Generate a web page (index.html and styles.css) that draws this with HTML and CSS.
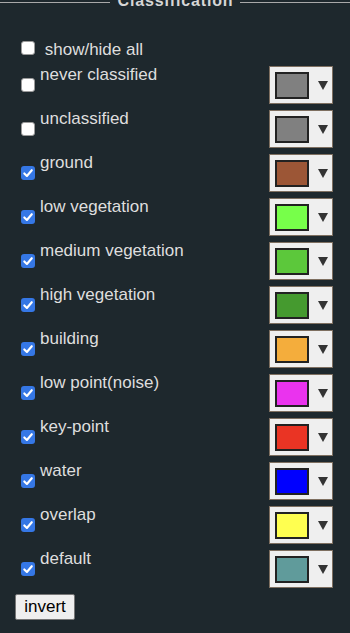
FILE: index.html
```html
<!DOCTYPE html>
<html>
<head>
<meta charset="utf-8">
<link rel="stylesheet" href="styles.css">
</head>
<body>
<div class="panel">
  <div class="legend-row">
    <span class="line"></span>
    <span class="legend">Classification</span>
    <span class="line"></span>
  </div>
  <div class="show-row">
    <span class="cb"></span>
    <span class="label">&nbsp;show/hide all</span>
  </div>
  <ul class="list">
    <li class="row"><span class="cb"></span><span class="label">never classified</span><span class="picker"><span class="swatch" style="background:#808080"></span><svg class="arrow" width="10" height="9" viewBox="0 0 10 9"><polygon points="0,0 10,0 5,9" fill="#333"/></svg></span></li>
    <li class="row"><span class="cb"></span><span class="label">unclassified</span><span class="picker"><span class="swatch" style="background:#808080"></span><svg class="arrow" width="10" height="9" viewBox="0 0 10 9"><polygon points="0,0 10,0 5,9" fill="#333"/></svg></span></li>
    <li class="row"><span class="cb on"><svg width="14" height="14" viewBox="0 0 14 14"><path d="M3.3 7.4 L5.9 10 L10.8 4.2" fill="none" stroke="#fff" stroke-width="2.1" stroke-linecap="round" stroke-linejoin="round"/></svg></span><span class="label">ground</span><span class="picker"><span class="swatch" style="background:#9c5636"></span><svg class="arrow" width="10" height="9" viewBox="0 0 10 9"><polygon points="0,0 10,0 5,9" fill="#333"/></svg></span></li>
    <li class="row"><span class="cb on"><svg width="14" height="14" viewBox="0 0 14 14"><path d="M3.3 7.4 L5.9 10 L10.8 4.2" fill="none" stroke="#fff" stroke-width="2.1" stroke-linecap="round" stroke-linejoin="round"/></svg></span><span class="label">low vegetation</span><span class="picker"><span class="swatch" style="background:#77ff4a"></span><svg class="arrow" width="10" height="9" viewBox="0 0 10 9"><polygon points="0,0 10,0 5,9" fill="#333"/></svg></span></li>
    <li class="row"><span class="cb on"><svg width="14" height="14" viewBox="0 0 14 14"><path d="M3.3 7.4 L5.9 10 L10.8 4.2" fill="none" stroke="#fff" stroke-width="2.1" stroke-linecap="round" stroke-linejoin="round"/></svg></span><span class="label">medium vegetation</span><span class="picker"><span class="swatch" style="background:#5cc83b"></span><svg class="arrow" width="10" height="9" viewBox="0 0 10 9"><polygon points="0,0 10,0 5,9" fill="#333"/></svg></span></li>
    <li class="row"><span class="cb on"><svg width="14" height="14" viewBox="0 0 14 14"><path d="M3.3 7.4 L5.9 10 L10.8 4.2" fill="none" stroke="#fff" stroke-width="2.1" stroke-linecap="round" stroke-linejoin="round"/></svg></span><span class="label">high vegetation</span><span class="picker"><span class="swatch" style="background:#459a2f"></span><svg class="arrow" width="10" height="9" viewBox="0 0 10 9"><polygon points="0,0 10,0 5,9" fill="#333"/></svg></span></li>
    <li class="row"><span class="cb on"><svg width="14" height="14" viewBox="0 0 14 14"><path d="M3.3 7.4 L5.9 10 L10.8 4.2" fill="none" stroke="#fff" stroke-width="2.1" stroke-linecap="round" stroke-linejoin="round"/></svg></span><span class="label">building</span><span class="picker"><span class="swatch" style="background:#f4ad3c"></span><svg class="arrow" width="10" height="9" viewBox="0 0 10 9"><polygon points="0,0 10,0 5,9" fill="#333"/></svg></span></li>
    <li class="row"><span class="cb on"><svg width="14" height="14" viewBox="0 0 14 14"><path d="M3.3 7.4 L5.9 10 L10.8 4.2" fill="none" stroke="#fff" stroke-width="2.1" stroke-linecap="round" stroke-linejoin="round"/></svg></span><span class="label">low point(noise)</span><span class="picker"><span class="swatch" style="background:#ea33ee"></span><svg class="arrow" width="10" height="9" viewBox="0 0 10 9"><polygon points="0,0 10,0 5,9" fill="#333"/></svg></span></li>
    <li class="row"><span class="cb on"><svg width="14" height="14" viewBox="0 0 14 14"><path d="M3.3 7.4 L5.9 10 L10.8 4.2" fill="none" stroke="#fff" stroke-width="2.1" stroke-linecap="round" stroke-linejoin="round"/></svg></span><span class="label">key-point</span><span class="picker"><span class="swatch" style="background:#ea3424"></span><svg class="arrow" width="10" height="9" viewBox="0 0 10 9"><polygon points="0,0 10,0 5,9" fill="#333"/></svg></span></li>
    <li class="row"><span class="cb on"><svg width="14" height="14" viewBox="0 0 14 14"><path d="M3.3 7.4 L5.9 10 L10.8 4.2" fill="none" stroke="#fff" stroke-width="2.1" stroke-linecap="round" stroke-linejoin="round"/></svg></span><span class="label">water</span><span class="picker"><span class="swatch" style="background:#0000ff"></span><svg class="arrow" width="10" height="9" viewBox="0 0 10 9"><polygon points="0,0 10,0 5,9" fill="#333"/></svg></span></li>
    <li class="row"><span class="cb on"><svg width="14" height="14" viewBox="0 0 14 14"><path d="M3.3 7.4 L5.9 10 L10.8 4.2" fill="none" stroke="#fff" stroke-width="2.1" stroke-linecap="round" stroke-linejoin="round"/></svg></span><span class="label">overlap</span><span class="picker"><span class="swatch" style="background:#ffff50"></span><svg class="arrow" width="10" height="9" viewBox="0 0 10 9"><polygon points="0,0 10,0 5,9" fill="#333"/></svg></span></li>
    <li class="row"><span class="cb on"><svg width="14" height="14" viewBox="0 0 14 14"><path d="M3.3 7.4 L5.9 10 L10.8 4.2" fill="none" stroke="#fff" stroke-width="2.1" stroke-linecap="round" stroke-linejoin="round"/></svg></span><span class="label">default</span><span class="picker"><span class="swatch" style="background:#609b9b"></span><svg class="arrow" width="10" height="9" viewBox="0 0 10 9"><polygon points="0,0 10,0 5,9" fill="#333"/></svg></span></li>
  </ul>
  <button class="invert">invert</button>
</div>
</body>
</html>
```

FILE: styles.css
```css
html, body {
  margin: 0;
  padding: 0;
  background: #1e282d;
  height: 100%;
  overflow: hidden;
}
body {
  font-family: "Liberation Sans", Arial, sans-serif;
  color: #dedede;
}
.panel {
  display: flex;
  flex-direction: column;
}
.legend-row {
  display: flex;
  align-items: flex-start;
  height: 10px;
}
.line {
  flex: 1;
  height: 1px;
  margin-top: 2px;
  background: #a9a9a9;
}
.legend {
  font-weight: bold;
  font-size: 16px;
  line-height: 18px;
  margin-top: -8px;
  letter-spacing: 0.85px;
  color: #d6d6d6;
  padding: 0 7px 0 8px;
}
.show-row {
  display: flex;
  align-items: flex-start;
  margin-top: 31px;
  height: 25px;
}
.cb {
  width: 14px;
  height: 14px;
  margin-left: 21px;
  flex: none;
  box-sizing: border-box;
  background: #fff;
  border: 1px solid #9a9a9a;
  border-radius: 3px;
  display: flex;
}
.cb.on {
  background: #3577e5;
  border: none;
}
.label {
  font-size: 17px;
  line-height: 20px;
  color: #dedede;
  margin-top: -1px;
  margin-left: 5px;
}
.list {
  list-style: none;
  margin: 0;
  padding: 0;
}
.row {
  display: flex;
  align-items: flex-start;
  height: 44px;
}
.row .cb {
  margin-top: 12px;
}
.picker {
  margin-left: auto;
  margin-right: 17px;
  width: 64px;
  height: 38px;
  box-sizing: border-box;
  border: 1px solid #7e6f60;
  background: #efefef;
  display: flex;
  align-items: center;
  padding-left: 5px;
}
.swatch {
  width: 34px;
  height: 27px;
  box-sizing: border-box;
  border: 2px solid #222;
}
.arrow {
  margin-left: 9px;
  margin-top: 1px;
}
.invert {
  align-self: flex-start;
  margin-left: 15px;
  width: 60px;
  height: 26px;
  padding: 0;
  font-family: "Liberation Sans", Arial, sans-serif;
  font-size: 17px;
  color: #000;
  background: #efefef;
  border: 1px solid #767676;
  border-radius: 2px;
}
```
